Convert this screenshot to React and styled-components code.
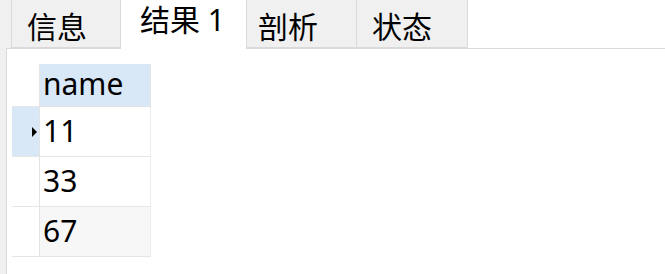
import React from "react";
import styled, { createGlobalStyle } from "styled-components";

const Global = createGlobalStyle`
  html, body { margin: 0; padding: 0; background: #ffffff; }
  body { font-family: "Noto Sans", "Noto Sans CJK SC", sans-serif; }
`;

const Page = styled.div`
  width: 665px;
  height: 274px;
  display: flex;
  flex-direction: column;
  overflow: hidden;
  background: #ffffff;
`;

const TabBar = styled.div`
  display: flex;
  height: 48px;
  align-items: flex-start;
  position: relative;
  z-index: 1;
`;

const TabLead = styled.div`
  width: 11px;
  height: 48px;
  background: #f0f0f0;
`;

const Tab = styled.div`
  box-sizing: border-box;
  width: ${(p) => p.$w}px;
  padding-left: ${(p) => p.$pl}px;
  padding-top: ${(p) => (p.$active ? 1 : 8)}px;
  height: ${(p) => (p.$active ? 49 : 48)}px;
  background: ${(p) => (p.$active ? "#ffffff" : "#f0f0f0")};
  border-right: 1px solid #dadada;
  border-left: ${(p) => (p.$first ? "1px solid #dadada" : "none")};
  border-bottom: ${(p) => (p.$active ? "none" : "1px solid #dadada")};
  font-family: "Noto Sans", "Noto Sans CJK SC", sans-serif;
  font-size: 30px;
  line-height: 38px;
  color: #000000;
  white-space: nowrap;
`;

const Body = styled.div`
  flex: 1;
  display: flex;
`;

const Gutter = styled.div`
  width: 6px;
  background: #f0f0f0;
`;

const Panel = styled.div`
  flex: 1;
  border-left: 1px solid #dadada;
  border-top: 1px solid #dadada;
  padding: 15px 0 0 5px;
`;

const Grid = styled.div`
  display: grid;
  grid-template-columns: 28px 111px;
  grid-template-rows: 43px;
  grid-auto-rows: 50px;
  font-family: "Noto Sans", "Noto Sans CJK SC", sans-serif;
  font-size: 30px;
  color: #000000;
`;

const Corner = styled.div`
  background: #ffffff;
  border-right: 1px solid #e6e6e6;
  border-bottom: 1px solid #e6e6e6;
`;

const HeadCell = styled.div`
  background: #d9e8f6;
  border-right: 1px solid #e3e3e3;
  border-bottom: 1px solid #e3e3e3;
  padding-left: 3px;
  display: flex;
  align-items: center;
  line-height: 1;
  padding-bottom: 2px;
`;

const RowHead = styled.div`
  background: ${(p) => (p.$current ? "#d9e8f6" : "#ffffff")};
  border-right: 1px solid #e3e3e3;
  border-bottom: 1px solid #e6e6e6;
  display: flex;
  align-items: center;
  justify-content: flex-end;
  padding-right: 2px;
`;

const Pointer = styled.span`
  width: 0;
  height: 0;
  border-left: 5px solid #000000;
  border-top: 5px solid transparent;
  border-bottom: 5px solid transparent;
`;

const Cell = styled.div`
  background: ${(p) => (p.$alt ? "#f7f7f7" : "#ffffff")};
  border-right: 1px solid #ececec;
  border-bottom: 1px solid #e6e6e6;
  padding-left: 3px;
  display: flex;
  align-items: center;
  line-height: 1;
  padding-bottom: 2px;
`;

const tabs = [
  { label: "信息", w: 110, pl: 15 },
  { label: "结果 1", w: 126, pl: 19, active: true },
  { label: "剖析", w: 110, pl: 11 },
  { label: "状态", w: 111, pl: 15 },
];

const rows = ["11", "33", "67"];

export default function App() {
  return (
    <>
      <Global />
      <Page>
        <TabBar>
          <TabLead />
          {tabs.map((t, i) => (
            <Tab key={t.label} $w={t.w} $pl={t.pl} $active={t.active} $first={i === 0}>
              {t.label}
            </Tab>
          ))}
        </TabBar>
        <Body>
          <Gutter />
          <Panel>
            <Grid>
              <Corner />
              <HeadCell>name</HeadCell>
              {rows.map((v, i) => (
                <React.Fragment key={v}>
                  <RowHead $current={i === 0}>{i === 0 && <Pointer />}</RowHead>
                  <Cell $alt={i === 2}>{v}</Cell>
                </React.Fragment>
              ))}
            </Grid>
          </Panel>
        </Body>
      </Page>
    </>
  );
}
